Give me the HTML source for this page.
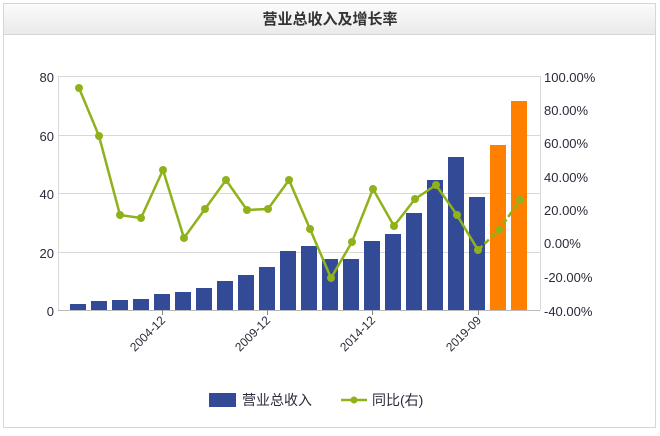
<!DOCTYPE html>
<html><head><meta charset="utf-8"><style>
body{margin:0;width:660px;height:431px;background:#fff;overflow:hidden;font-family:"Liberation Sans","Noto Sans CJK SC",sans-serif}
</style></head><body>
<svg width="660" height="431" xmlns="http://www.w3.org/2000/svg" font-family="Liberation Sans, Noto Sans CJK SC, sans-serif">
<defs><linearGradient id="g" x1="0" y1="0" x2="0" y2="1"><stop offset="0" stop-color="#fbfbfb"/><stop offset="1" stop-color="#eaeaea"/></linearGradient></defs>
<rect x="3.5" y="3.5" width="652" height="424" fill="#fff" stroke="#d6d6d6"/>
<rect x="4" y="4" width="651" height="30" fill="url(#g)"/>
<line x1="4" y1="34.5" x2="655" y2="34.5" stroke="#d6d6d6"/>
<text x="330" y="24" text-anchor="middle" font-size="15" font-weight="bold" fill="#333">营业总收入及增长率</text>
<g stroke="#d8d8d8" stroke-width="1">
<line x1="58" y1="76.5" x2="540" y2="76.5"/><line x1="58" y1="135.5" x2="540" y2="135.5"/><line x1="58" y1="193.5" x2="540" y2="193.5"/><line x1="58" y1="252.5" x2="540" y2="252.5"/>
<line x1="58.5" y1="76" x2="58.5" y2="310"/><line x1="540.5" y1="76" x2="540.5" y2="310"/>
<line x1="58" y1="310.5" x2="540" y2="310.5" stroke="#bbb"/>
<line x1="162.5" y1="310" x2="162.5" y2="315" stroke="#888"/><line x1="267.5" y1="310" x2="267.5" y2="315" stroke="#888"/><line x1="372.5" y1="310" x2="372.5" y2="315" stroke="#888"/><line x1="478.5" y1="310" x2="478.5" y2="315" stroke="#888"/>
</g>
<g font-size="13" fill="#2a2a3a" text-anchor="end">
<text x="54" y="82">80</text><text x="54" y="141">60</text><text x="54" y="199">40</text><text x="54" y="258">20</text><text x="54" y="316">0</text>
</g>
<g font-size="13" fill="#2a2a3a">
<text x="544" y="82">100.00%</text><text x="544" y="115">80.00%</text><text x="544" y="148">60.00%</text><text x="544" y="182">40.00%</text><text x="544" y="215">20.00%</text><text x="544" y="248">0.00%</text><text x="544" y="282">-20.00%</text><text x="544" y="316">-40.00%</text>
</g>
<g fill="#334a96">
<rect x="70" y="304" width="16" height="6"/><rect x="91" y="301" width="16" height="9"/><rect x="112" y="300" width="16" height="10"/><rect x="133" y="299" width="16" height="11"/><rect x="154" y="294" width="16" height="16"/><rect x="175" y="292" width="16" height="18"/><rect x="196" y="288" width="16" height="22"/><rect x="217" y="281" width="16" height="29"/><rect x="238" y="275" width="16" height="35"/><rect x="259" y="267" width="16" height="43"/><rect x="280" y="251" width="16" height="59"/><rect x="301" y="246" width="16" height="64"/><rect x="322" y="259" width="16" height="51"/><rect x="343" y="259" width="16" height="51"/><rect x="364" y="241" width="16" height="69"/><rect x="385" y="234" width="16" height="76"/><rect x="406" y="213" width="16" height="97"/><rect x="427" y="180" width="16" height="130"/><rect x="448" y="157" width="16" height="153"/><rect x="469" y="197" width="16" height="113"/>
</g>
<g fill="#ff7f00"><rect x="490" y="145" width="16" height="165"/><rect x="511" y="101" width="16" height="209"/></g>
<polyline fill="none" stroke="#8fb21a" stroke-width="2.5" points="79,88 99,136 120,215 141,218 163,170 184,238 205,209 226,180 247,210 268,209 289,180 310,229 331,278 352,242 373,189 394,226 415,199 436,185 457,215 478,250"/>
<polyline fill="none" stroke="#8fb21a" stroke-width="2.5" stroke-dasharray="6,3" points="478,250 499,230 520,200"/>
<g fill="#8fb21a">
<circle cx="79" cy="88" r="4"/><circle cx="99" cy="136" r="4"/><circle cx="120" cy="215" r="4"/><circle cx="141" cy="218" r="4"/><circle cx="163" cy="170" r="4"/><circle cx="184" cy="238" r="4"/><circle cx="205" cy="209" r="4"/><circle cx="226" cy="180" r="4"/><circle cx="247" cy="210" r="4"/><circle cx="268" cy="209" r="4"/><circle cx="289" cy="180" r="4"/><circle cx="310" cy="229" r="4"/><circle cx="331" cy="278" r="4"/><circle cx="352" cy="242" r="4"/><circle cx="373" cy="189" r="4"/><circle cx="394" cy="226" r="4"/><circle cx="415" cy="199" r="4"/><circle cx="436" cy="185" r="4"/><circle cx="457" cy="215" r="4"/><circle cx="478" cy="250" r="4"/><circle cx="499" cy="230" r="4"/><circle cx="520" cy="200" r="4"/>
</g>
<g font-size="12" fill="#2a2a3a" text-anchor="end">
<text transform="translate(166,321) rotate(-45)">2004-12</text>
<text transform="translate(271,321) rotate(-45)">2009-12</text>
<text transform="translate(376,321) rotate(-45)">2014-12</text>
<text transform="translate(482,321) rotate(-45)">2019-09</text>
</g>
<rect x="209" y="393" width="27" height="14" fill="#334a96"/>
<text x="242" y="405" font-size="14" fill="#2a2a3a">营业总收入</text>
<line x1="341" y1="400" x2="367" y2="400" stroke="#8fb21a" stroke-width="2.5"/><circle cx="354" cy="400" r="3.5" fill="#8fb21a"/>
<text x="372" y="405" font-size="14" fill="#2a2a3a">同比(右)</text>
</svg>
</body></html>
